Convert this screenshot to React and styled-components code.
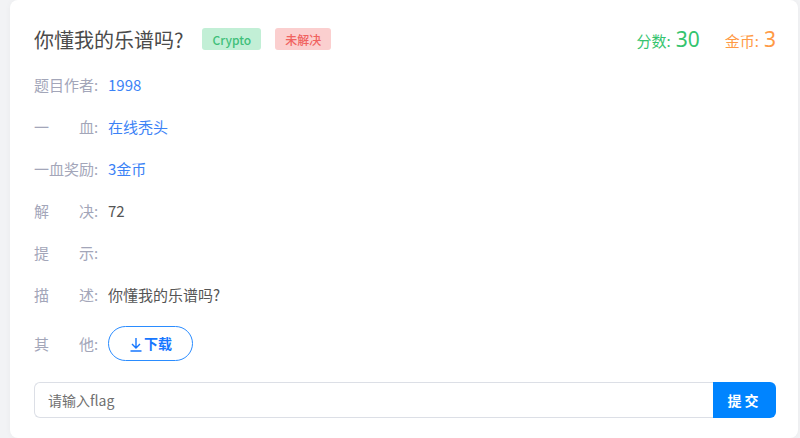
import React from "react";
import styled, { createGlobalStyle } from "styled-components";

const Global = createGlobalStyle`
  html, body {
    margin: 0;
    padding: 0;
    background: #f2f3f5;
    font-family: "Noto Sans CJK SC", "Noto Sans", sans-serif;
    overflow: hidden;
  }
`;

const Page = styled.div`
  padding: 0 2px 0 10px;
  height: 438px;
  box-sizing: border-box;
`;

const Card = styled.div`
  background: #fff;
  border-radius: 8px;
  height: 438px;
  box-sizing: border-box;
  padding: 20px 22px 0 24px;
  box-shadow: 0 0 6px rgba(0, 0, 0, 0.04);
`;

const Head = styled.div`
  display: flex;
  align-items: center;
  height: 38px;
`;

const Title = styled.h2`
  margin: 0 19px 0 0;
  font-size: 20px;
  font-weight: 400;
  color: #4a4a4a;
`;

const Tag = styled.span`
  display: inline-flex;
  align-items: center;
  height: 22px;
  padding: 0 10px;
  margin-right: 14px;
  border-radius: 3px;
  font-size: 12px;
  font-weight: 500;
  background: ${(p) => p.$bg};
  color: ${(p) => p.$fg};
`;

const Stats = styled.div`
  margin-left: auto;
  display: flex;
  align-items: baseline;
  gap: 25px;
`;

const Stat = styled.span`
  color: ${(p) => p.$color};
  font-size: 15px;
  b {
    font-weight: 400;
    font-size: 21px;
    margin-left: 5px;
    font-family: "Noto Sans", sans-serif;
  }
`;

const Rows = styled.div`
  margin-top: 5px;
`;

const Row = styled.div`
  display: flex;
  align-items: center;
  height: 42px;
  margin-top: ${(p) => p.$gap || 0}px;
  font-size: 15px;
`;

const Label = styled.span`
  display: inline-flex;
  width: 74px;
  flex: none;
  color: #a3a6b9;
  span {
    width: 60px;
    text-align: justify;
    text-align-last: justify;
  }
`;

const Value = styled.span`
  color: ${(p) => (p.$link ? "#3b82f6" : "#555")};
`;

const DownBtn = styled.button`
  height: 35px;
  width: 85px;
  border: 1px solid #2a8cff;
  border-radius: 18px;
  background: #fff;
  color: #1677ff;
  font-family: inherit;
  font-size: 14px;
  font-weight: 700;
  display: flex;
  align-items: center;
  justify-content: center;
  gap: 1px;
  svg {
    margin-top: 2px;
  }
`;

const Submit = styled.div`
  display: flex;
  margin-top: 18px;
  height: 36px;
`;

const Input = styled.input`
  flex: 1;
  border: 1px solid #dcdfe6;
  border-right: none;
  border-radius: 6px 0 0 6px;
  padding: 0 13px;
  font-family: inherit;
  font-size: 14px;
  color: #555;
  outline: none;
  &::placeholder {
    color: #707070;
  }
`;

const Go = styled.button`
  width: 63px;
  border: none;
  border-radius: 0 6px 6px 0;
  background: #0084ff;
  color: #fff;
  font-family: inherit;
  font-weight: 700;
  font-size: 14px;
  letter-spacing: 3px;
  padding-left: 6px;
`;

const rows = [
  ["题目作者", "1998", true],
  ["一血", "在线秃头", true],
  ["一血奖励", "3金币", true],
  ["解决", "72", false],
  ["提示", "", false],
  ["描述", "你懂我的乐谱吗?", false],
];

const L = ({ text }) => (
  <Label>
    <span>{text}</span>:
  </Label>
);

export default function App() {
  return (
    <Page>
      <Global />
      <Card>
        <Head>
          <Title>你懂我的乐谱吗?</Title>
          <Tag $bg="#c2efd6" $fg="#3fbf7a">Crypto</Tag>
          <Tag $bg="#fbcfcf" $fg="#f0625f">未解决</Tag>
          <Stats>
            <Stat $color="#35c46e">
              分数:<b>30</b>
            </Stat>
            <Stat $color="#ff9a45">
              金币:<b>3</b>
            </Stat>
          </Stats>
        </Head>
        <Rows>
          {rows.map(([k, v, link]) => (
            <Row key={k}>
              <L text={k} />
              <Value $link={link}>{v}</Value>
            </Row>
          ))}
          <Row $gap={7}>
            <L text="其他" />
            <DownBtn>
              <svg width="14" height="16" viewBox="0 0 14 16" fill="none" stroke="#1677ff" strokeWidth="1.4">
                <path d="M7 2v10M3 8l4 4 4-4M1.5 15h11" />
              </svg>
              下载
            </DownBtn>
          </Row>
        </Rows>
        <Submit>
          <Input placeholder="请输入flag" />
          <Go>提交</Go>
        </Submit>
      </Card>
    </Page>
  );
}
